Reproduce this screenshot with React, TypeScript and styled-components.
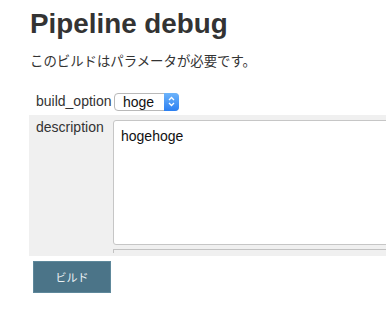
import React from 'react'
import styled, { createGlobalStyle } from 'styled-components'

const GlobalStyle = createGlobalStyle`
  html, body {
    margin: 0;
    padding: 0;
    overflow: hidden;
    background: #fff;
  }
  body {
    font-family: "Liberation Sans", "Noto Sans CJK JP", sans-serif;
    color: #333;
  }
`

const Page = styled.div`
  width: 386px;
  height: 317px;
  overflow: hidden;
  padding-left: 29px;
  box-sizing: border-box;
`

const Title = styled.h1`
  margin: 8px 0 0 1px;
  font-size: 27.8px;
  line-height: 32px;
  font-weight: bold;
  color: #333;
  white-space: nowrap;
`

const Lead = styled.p`
  margin: 13px 0 0 1px;
  font-size: 13.4px;
  line-height: 18px;
  color: #333;
`

const Form = styled.div`
  margin-top: 17px;
  width: 420px;
`

const Row = styled.div<{ $shaded?: boolean; $top?: boolean }>`
  display: flex;
  align-items: ${(p) => (p.$top ? 'flex-start' : 'center')};
  background: ${(p) => (p.$shaded ? '#f0f0f0' : 'transparent')};
  min-height: 27px;
  padding-bottom: ${(p) => (p.$shaded ? '3px' : '0')};
`

const Label = styled.div<{ $top?: boolean }>`
  width: 77px;
  padding-left: 7px;
  padding-top: ${(p) => (p.$top ? '4px' : '0')};
  font-size: 14px;
  line-height: 17px;
  color: #333;
  flex-shrink: 0;
`

const SelectBox = styled.div`
  position: relative;
  width: 65px;
  height: 18px;
  margin-left: 1px;
`

const Select = styled.select`
  appearance: none;
  -webkit-appearance: none;
  width: 100%;
  height: 100%;
  box-sizing: border-box;
  border: 1px solid #b9b9b9;
  border-radius: 4px;
  background: #fff;
  font-family: "Liberation Sans", sans-serif;
  font-size: 14px;
  color: #111;
  padding: 0 0 0 8px;
  margin: 0;
  outline: none;
`

const Stepper = styled.div`
  position: absolute;
  right: 0;
  top: 0;
  width: 15px;
  height: 18px;
  border-radius: 0 4px 4px 0;
  background: linear-gradient(#6db4fb, #2b7ff1);
  display: flex;
  align-items: center;
  justify-content: center;
  pointer-events: none;
`

const Field = styled.div`
  display: flex;
  flex-direction: column;
  padding-top: 5px;
`

const TextArea = styled.textarea`
  width: 300px;
  height: 125px;
  box-sizing: border-box;
  border: 1px solid #c6c6c6;
  border-radius: 3px;
  padding: 7px;
  margin: 0;
  resize: none;
  font-family: "Liberation Sans", sans-serif;
  font-size: 14px;
  line-height: 17px;
  color: #111;
  background: #fff;
  outline: none;
`

const Handle = styled.div`
  margin-top: 4px;
  height: 4px;
  width: 300px;
  border-top: 1px solid #c2c2c2;
  border-left: 1px solid #c2c2c2;
  box-sizing: border-box;
`

const Button = styled.button`
  margin: 5px 0 0 4px;
  width: 78px;
  height: 32px;
  box-sizing: border-box;
  background: #4b7488;
  border: 1px solid #5e889b;
  color: #eef3f5;
  font-family: "Liberation Sans", "Noto Sans CJK JP", sans-serif;
  font-size: 11px;
  cursor: pointer;
`

export default function App() {
  return (
    <>
      <GlobalStyle />
      <Page>
        <Title>Pipeline debug</Title>
        <Lead>このビルドはパラメータが必要です。</Lead>
        <Form>
          <Row>
            <Label>build_option</Label>
            <SelectBox>
              <Select defaultValue="hoge">
                <option value="hoge">hoge</option>
              </Select>
              <Stepper>
                <svg width="7" height="11" viewBox="0 0 7 11">
                  <path d="M1 4 L3.5 1.5 L6 4 M1 7 L3.5 9.5 L6 7" fill="none" stroke="#fff" strokeWidth="1.3" />
                </svg>
              </Stepper>
            </SelectBox>
          </Row>
          <Row $shaded $top>
            <Label $top>description</Label>
            <Field>
              <TextArea defaultValue="hogehoge" />
              <Handle />
            </Field>
          </Row>
        </Form>
        <Button>ビルド</Button>
      </Page>
    </>
  )
}
